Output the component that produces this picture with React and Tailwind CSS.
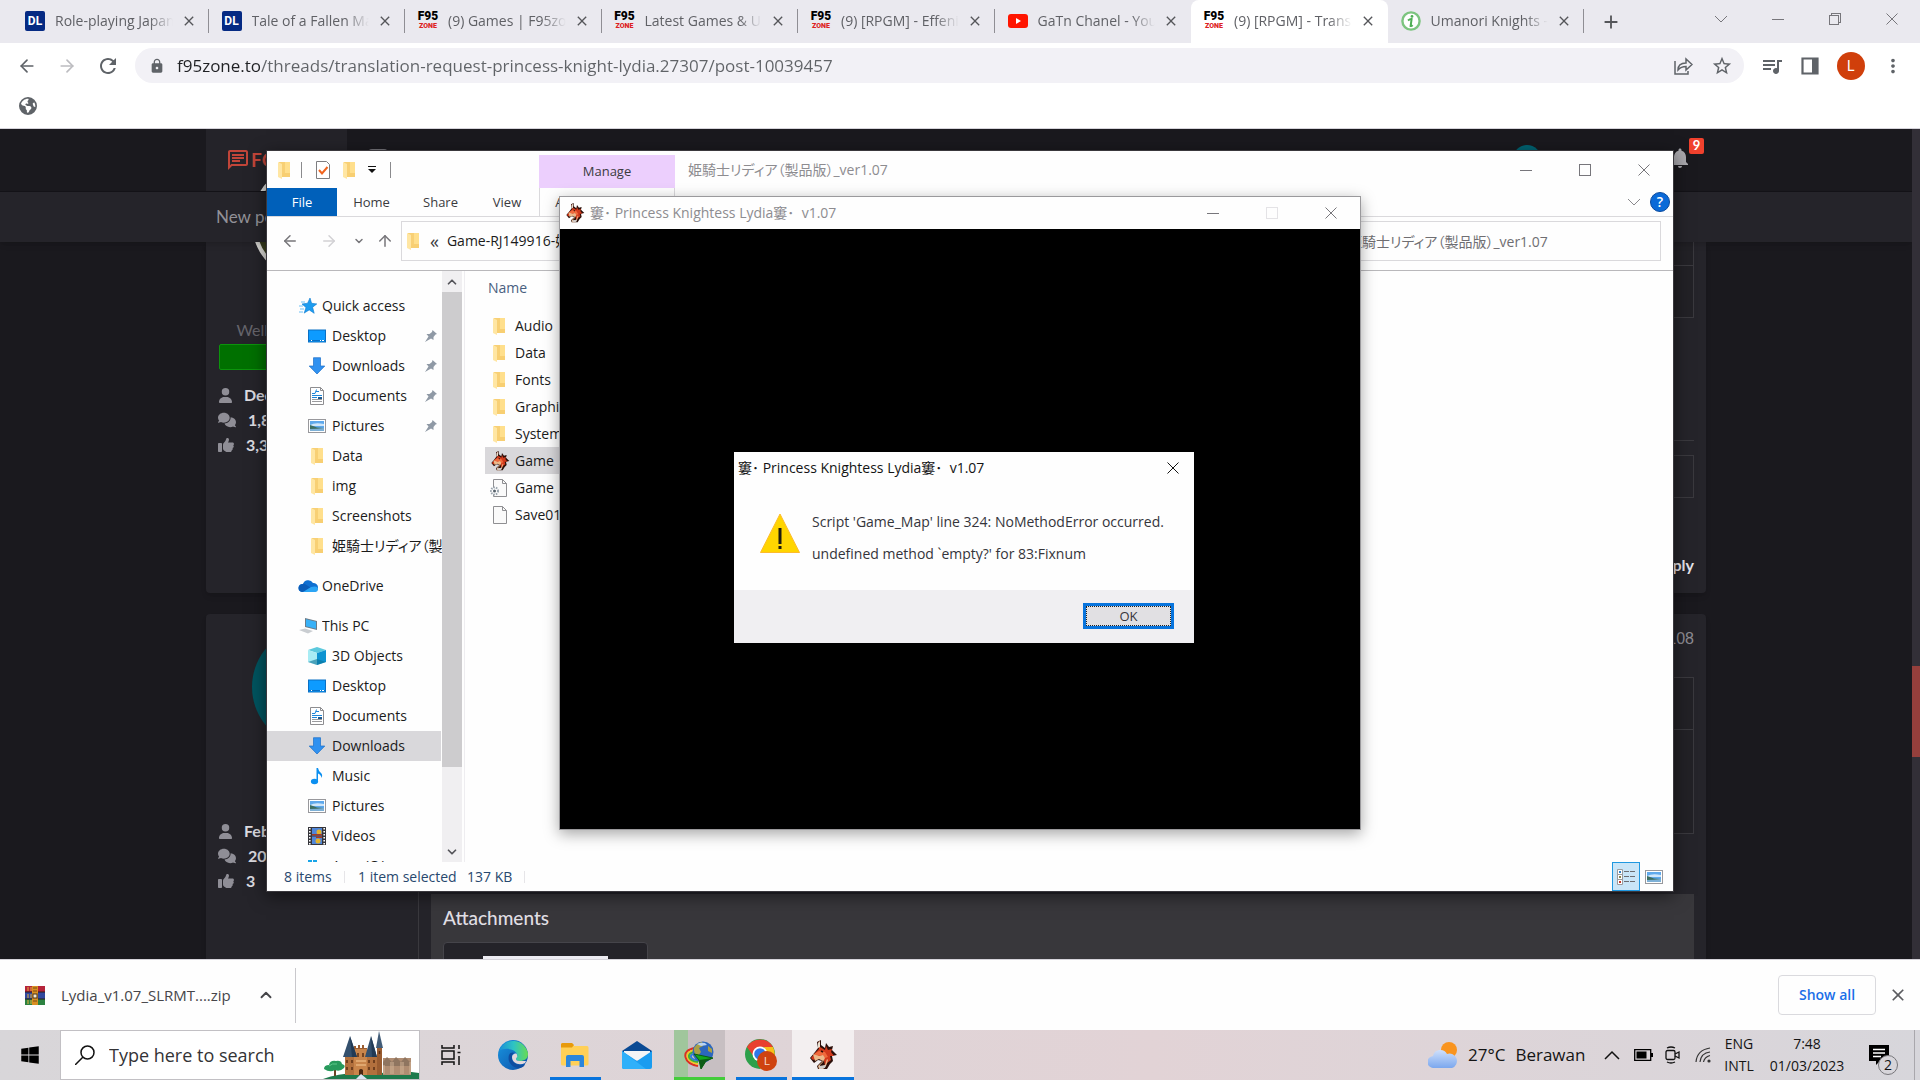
import clsx from 'clsx'
import { FaComments, FaThumbsUp, FaUser, FaWindows, FaEarthAmericas } from 'react-icons/fa6'
import {
  MdAdd, MdClose, MdLock, MdMoreVert, MdNotifications, MdOutlineChat,
  MdQueueMusic, MdRefresh, MdStarBorder,
} from 'react-icons/md'
import { ArrowLeft, ArrowRight, ArrowUp, ChevronDown, ChevronUp } from 'lucide-react'

const UI = "font-['Open_Sans','Noto_Sans_CJK_JP',sans-serif]"
const FOLDER_NAME = '姫騎士リディア（製品版）_ver1.07'
const GAME_TITLE = '窶･ Princess Knightess Lydia窶･\u00a0 v1.07'

/* ---------- favicons ---------- */

function DlIcon() {
  return (
    <span className="flex h-5 w-5 items-center justify-center rounded-xs bg-[#052a83] font-['Roboto',sans-serif] text-xs font-bold text-white">DL</span>
  )
}

function F95Icon() {
  return (
    <span className="flex h-5 w-5 flex-col items-center font-['Roboto',sans-serif] font-black leading-none">
      <span className="text-xs leading-[11px] text-black">F95</span>
      <span className="text-[7px] leading-[8px] text-[#d22]">ZONE</span>
    </span>
  )
}

function YoutubeIcon() {
  return (
    <svg viewBox="0 0 20 20" className="h-5 w-5">
      <rect y="3" width="20" height="14" rx="3" fill="#ff1500" />
      <path d="M8 7v6l5-3z" fill="#fff" />
    </svg>
  )
}

function InfoIcon() {
  return (
    <svg viewBox="0 0 20 20" className="h-5 w-5">
      <circle cx="10" cy="10" r="8.6" fill="#fff" stroke="#7cc47f" strokeWidth="2.4" />
      <path d="M7 9.5q2-1.6 3.6-1.4L9.6 15q1 .3 2-.8" fill="none" stroke="#4fae55" strokeWidth="2" />
      <circle cx="11" cy="5.4" r="1.4" fill="#4fae55" />
    </svg>
  )
}

/* ---------- explorer icons ---------- */

function FolderIcon() {
  return (
    <svg viewBox="0 0 18 18" className="h-[18px] w-[18px]">
      <path d="M4 1h11v12.500H4z" fill="#f8d075" />
      <path d="M10 1h5v12h-5z" fill="#ffdf8c" />
      <path d="M3 1l4 2v15l-4-2z" fill="#ffe6a3" />
      <path d="M7 12h8v4H7z" fill="#f8cf72" />
    </svg>
  )
}

function StarIcon() {
  return (
    <svg viewBox="0 0 18 18" className="h-[18px] w-[18px]">
      <path d="M11 1l1.6 5.3 5.2.6-4.2 3.3 1.6 6.1-5-3.4-5 3.2 1.8-5.6L3 7l5.6-.8z" fill="#1c9cf0" stroke="#0a78cf" strokeWidth=".6" />
      <path d="M0 9h4M1 12h4M0 15h4M2 5h4" stroke="#6cc0f5" />
    </svg>
  )
}

function DesktopIcon() {
  return (
    <svg viewBox="0 0 18 18" className="h-[18px] w-[18px]">
      <rect x=".5" y="3" width="17" height="12" fill="#0d9bff" stroke="#0a70c4" />
      <path d="M1 13.5h16" stroke="#0a70c4" />
      <path d="M3 13.5h1M12 13.5h1M14 13.5h2" stroke="#fff" />
    </svg>
  )
}

function DownloadIcon() {
  return (
    <svg viewBox="0 0 18 18" className="h-[18px] w-[18px]">
      <path d="M5.500.7h7v8.300h4.300L9 17 1.200 9h4.300z" fill="#3091f0" stroke="#1a6fc9" strokeWidth=".7" />
    </svg>
  )
}

function DocumentIcon() {
  return (
    <svg viewBox="0 0 18 18" className="h-[18px] w-[18px]">
      <path d="M2.500.5h10l3 3v14h-13z" fill="#fff" stroke="#8d8d90" />
      <path d="M12.500.5v3h3" fill="none" stroke="#8d8d90" />
      <path d="M4 6.500h3l1.500-4M8 4.500h3M4 8.500h10M4 10.500h5" stroke="#1d86d9" fill="none" />
      <path d="M4 12.500h10M4 14.500h10" stroke="#9a9a9d" />
      <path d="M10 10h4v2h-4z" fill="#1b5a92" />
    </svg>
  )
}

function PictureIcon() {
  return (
    <svg viewBox="0 0 18 18" className="h-[18px] w-[18px]">
      <rect x=".5" y="2.500" width="17" height="13" fill="#fff" stroke="#98989c" />
      <rect x="2" y="4" width="14" height="10" fill="#5fa9ec" />
      <path d="M2 8q5-3 14-1v2H2z" fill="#cfe6fa" />
      <path d="M2 8q4 1 7 2.500l7 .5v3H2z" fill="#3d6f62" />
      <path d="M2 12q7 0 14-1v3H2z" fill="#7db0d6" />
    </svg>
  )
}

function CloudIcon() {
  return (
    <svg viewBox="0 0 20 18" className="h-[18px] w-[20px]">
      <path d="M5 7a5.500 5.500 0 0 1 10-1 4.500 4.500 0 0 1 1 9H4A4 4 0 0 1 5 7z" fill="#0f6fd1" />
      <path d="M6 6.500l9 5.500-10 3H4a4 4 0 0 1-1-7.600z" fill="#0a5cb8" />
      <path d="M5 15l8-5q7-1.500 7 2a3 3 0 0 1-3 3z" fill="#2ba5f5" />
    </svg>
  )
}

function PcIcon() {
  return (
    <svg viewBox="0 0 20 18" className="h-[18px] w-[20px]">
      <path d="M7 1l12 3v9L7 10z" fill="#6b7b88" />
      <path d="M8 2.200l10 2.600v7L8 9.200z" fill="#38b1f7" />
      <path d="M1 13l6-1.500 8 2.500-5 2.500z" fill="#c9cdd1" />
    </svg>
  )
}

function CubeIcon() {
  return (
    <svg viewBox="0 0 18 18" className="h-[18px] w-[18px]">
      <path d="M9 0l9 3-9 3-9-3z" fill="#5cc9dd" />
      <path d="M0 3l9 3v12l-9-3z" fill="#a8ecf4" />
      <path d="M18 3l-9 3v12l9-3z" fill="#0d93d1" />
      <path d="M0 15l9-3 9 3-9 3z" fill="#0a7295" opacity=".6" />
    </svg>
  )
}

function MusicIcon() {
  return (
    <svg viewBox="0 0 18 18" className="h-[18px] w-[18px]">
      <ellipse cx="6.500" cy="14.500" rx="3.600" ry="2.800" fill="#0b8ff0" />
      <path d="M8.500 1H10q.5 3 3 5 2 2 .5 5-.2-3-3.500-4.500V15H8.500z" fill="#0b8ff0" />
    </svg>
  )
}

function VideoIcon() {
  return (
    <svg viewBox="0 0 18 18" className="h-[18px] w-[18px]">
      <rect width="18" height="18" fill="#35353a" />
      <path d="M1.800 1v17M16.200 1v17" stroke="#fff" strokeWidth="1.600" strokeDasharray="1.600 1.400" />
      <rect x="4" y="1" width="10" height="7.500" fill="#4f86d9" />
      <rect x="4" y="9.500" width="10" height="7.500" fill="#4f86d9" />
      <circle cx="11" cy="5" r="2.500" fill="#e3b22b" />
      <circle cx="10" cy="14" r="2.500" fill="#e3b22b" />
      <path d="M4 7h10v1.500H4zM8 9.500h6V11H8z" fill="#a63b22" />
    </svg>
  )
}

function DriveIcon() {
  return (
    <svg viewBox="0 0 18 18" className="h-[18px] w-[18px]">
      <path d="M0 3h4v4H0zM5 3h4v4H5z" fill="#18a5e8" />
      <path d="M0 9h18v6H0z" fill="#b5b7ba" />
    </svg>
  )
}

function BlankFileIcon({ gear }) {
  return (
    <svg viewBox="0 0 18 18" className="h-[18px] w-[18px]">
      <path d="M3.500.5h9l4 4v13h-13z" fill="#fafafa" stroke="#8f8f92" />
      <path d="M12.500.5v4h4" fill="none" stroke="#8f8f92" />
      {gear && (
        <>
          <circle cx="4.500" cy="12" r="3.500" fill="#fff" stroke="#9aa4ad" strokeWidth="2" strokeDasharray="1.500 1" />
          <circle cx="4.500" cy="12" r="1.500" fill="#56616b" />
        </>
      )}
    </svg>
  )
}

function CheckedFileIcon() {
  return (
    <svg viewBox="0 0 18 18" className="h-[18px] w-[18px]">
      <path d="M2.500.5h10l3 3v14h-13z" fill="#fff" stroke="#7d7d80" />
      <path d="M5 9l3 3.500L13.500 6" fill="none" stroke="#f0641e" strokeWidth="2" />
    </svg>
  )
}

function PinIcon() {
  return (
    <svg viewBox="0 0 14 14" className="h-[14px] w-[14px]">
      <path d="M8.500 1l4.500 4-1.500.6-2 2.400v3L7 9.500 1 13l3.500-5.500L2.500 5h3l2.500-2z" fill="#8f99a5" />
    </svg>
  )
}

function DragonIcon({ className }) {
  return (
    <svg viewBox="0 0 28 30" className={className}>
      <path d="M9 8L8 2l4-2v5l4 3 1-5 3 4 4-1-1 4 5 5-5 1 1 5-3 3-3 5H9l-1-3 5-5-4-1-4 3-4-5 5-6z" fill="#2b0f0a" />
      <path d="M10 9L9 3l2-2v6l5 3 1-4 2 4 4-1-1 3 3 4-4 0 1 4-4 3-2 3-1-6-6-2-5 2-2-2 4-5z" fill="#d23a1c" />
      <path d="M10 11l6 1 3 5-3 1-3-3-5 1-3-2z" fill="#f06a3c" />
      <path d="M4 14l3 1 3 1 4-1 2 3-2 4-3 3v2l5-2 2-6 1 1-2 6-3 3H10l-1-3 5-5-4-2-4 2z" fill="#edb98a" />
      <path d="M10 26l7-1-1 3-5 1z" fill="#cfcac8" />
      <path d="M9 3l2-2v6l-2 1z" fill="#e8dfcf" />
      <path d="M12 11l2 1" stroke="#2b0f0a" strokeWidth="1.500" />
    </svg>
  )
}

/* ---------- window buttons ---------- */

function WinGlyph({ type, className }) {
  return (
    <svg viewBox="0 0 12 12" className={clsx('h-3 w-3', className)} fill="none" stroke="currentColor" shapeRendering={type === 'close' ? 'auto' : 'crispEdges'}>
      {type === 'min' && <path d="M0 6.500h12" />}
      {type === 'max' && <path d="M.5.5h11v11H.5z" />}
      {type === 'restore' && <path d="M.5 2.500h9v9h-9zM2.500 2V.5h9v9H10" />}
      {type === 'close' && <path d="M.5.5l11 11M11.500.5l-11 11" />}
      {type === 'down' && <path d="M0 3l6 6 6-6" shapeRendering="auto" />}
    </svg>
  )
}

/* ---------- browser ---------- */

const TABS = [
  { icon: DlIcon, title: 'Role-playing Japanese' },
  { icon: DlIcon, title: 'Tale of a Fallen Maiden' },
  { icon: F95Icon, title: '(9) Games | F95zone' },
  { icon: F95Icon, title: 'Latest Games & Updates' },
  { icon: F95Icon, title: '(9) [RPGM] - Effenia' },
  { icon: YoutubeIcon, title: 'GaTn Chanel - YouTube' },
  { icon: F95Icon, title: '(9) [RPGM] - Translation', active: true },
  { icon: InfoIcon, title: 'Umanori Knights -' },
]

function TabStrip() {
  return (
    <header className="flex h-[43px] shrink-0 bg-[#eae9ef] pl-3">
      <nav className="flex w-[1572px] min-w-0">
        {TABS.map(({ icon: Icon, title, active }, i) => (
          <div key={i} className={clsx('flex min-w-0 flex-1 items-center pb-px', active && 'rounded-t-lg bg-white')}>
            <div className={clsx('flex h-6 min-w-0 flex-1 items-center border-r pr-[11px] pl-[13px]', active || i === 5 ? 'border-transparent' : 'border-[#8f8e94]')}>
              <Icon />
              <span className="ml-[10px] min-w-0 flex-1 overflow-hidden text-sm whitespace-nowrap text-[#606166] [mask-image:linear-gradient(to_right,#000_80%,transparent)]">{title}</span>
              <button aria-label="Close tab" className="ml-2 text-[#55565a]"><MdClose size={16} /></button>
            </div>
          </div>
        ))}
      </nav>
      <button aria-label="New tab" className="ml-4 text-[#55565a]"><MdAdd size={22} /></button>
      <div className="ml-auto flex h-[37px] text-[#77767b]">
        <button aria-label="Search tabs" className="flex w-[57px] items-center justify-center"><WinGlyph type="down" /></button>
        <button aria-label="Minimize" className="flex w-[57px] items-center justify-center"><WinGlyph type="min" /></button>
        <button aria-label="Restore" className="flex w-[57px] items-center justify-center"><WinGlyph type="restore" /></button>
        <button aria-label="Close" className="flex w-[57px] items-center justify-center"><WinGlyph type="close" /></button>
      </div>
    </header>
  )
}

function Toolbar() {
  return (
    <div className="flex h-[45px] shrink-0 items-center bg-white text-[#5f6368]">
      <div className="flex w-[135px] shrink-0 items-center justify-between pr-[15px] pl-[17px]">
        <button aria-label="Back"><ArrowLeft size={20} /></button>
        <button aria-label="Forward" className="text-[#bcbcc0]"><ArrowRight size={20} /></button>
        <button aria-label="Reload"><MdRefresh size={24} /></button>
      </div>
      <div className="flex h-[35px] flex-1 items-center rounded-full bg-[#f2f1f6] pr-[11px] pl-[14px]">
        <MdLock size={16} />
        <input
          aria-label="Address"
          defaultValue="f95zone.to/threads/translation-request-princess-knight-lydia.27307/post-10039457"
          className="ml-3 min-w-0 flex-1 bg-[linear-gradient(to_right,#202124_84px,#606367_84px)] bg-clip-text text-[17px] text-transparent outline-none"
        />
        <button aria-label="Share" className="mr-[18px]">
          <svg viewBox="0 0 20 20" className="h-5 w-5" fill="none" stroke="currentColor" strokeWidth="1.500">
            <path d="M2 5v13h13v-3" />
            <path d="M5 14q0-7 8-7V3l6 5.500L13 14v-3.500q-5 0-8 3.500z" />
          </svg>
        </button>
        <button aria-label="Bookmark"><MdStarBorder size={22} /></button>
      </div>
      <div className="flex w-[176px] shrink-0 items-center justify-between pr-4 pl-[16px]">
        <button aria-label="Media"><MdQueueMusic size={24} /></button>
        <button aria-label="Side panel">
          <svg viewBox="0 0 18 18" className="h-[18px] w-[18px]">
            <path d="M1.500 1.500h15v15h-15z" fill="none" stroke="currentColor" strokeWidth="2.200" />
            <path d="M11 1h6v16h-6z" fill="currentColor" />
          </svg>
        </button>
        <button aria-label="Profile" className="h-7 w-7 rounded-full bg-[#d03f0b] font-['Roboto',sans-serif] text-sm text-white">L</button>
        <button aria-label="Menu"><MdMoreVert size={22} /></button>
      </div>
    </div>
  )
}

/* ---------- forum page ---------- */

function UserStats({ joined, messages, likes }) {
  return (
    <dl className="flex w-full flex-col gap-px pl-3 text-base leading-6 font-bold text-[#dcdbe0]">
      <div className="flex items-center gap-3"><dt className="w-[14px] text-[#8f8e96]"><FaUser size={15} /></dt><dd>{joined}</dd></div>
      <div className="flex items-center gap-3"><dt className="w-[18px] text-[#8f8e96]"><FaComments size={18} /></dt><dd>{messages}</dd></div>
      <div className="flex items-center gap-3"><dt className="w-4 text-[#8f8e96]"><FaThumbsUp size={16} /></dt><dd>{likes}</dd></div>
    </dl>
  )
}

function ForumPage() {
  return (
    <main className="isolate flex min-h-0 flex-1 border-t border-[#d5d3da] bg-[#1a191e] font-['Lato',sans-serif]">
      <div className="flex min-w-0 flex-1 flex-col overflow-hidden">
        <div className="h-[62px] shrink-0">
          <div className="mx-auto flex h-full max-w-[1500px]">
            <a href="#forums" className="flex w-[141px] items-center gap-px bg-[#242329] pl-5 text-[19px] font-bold text-[#c14539]">
              <MdOutlineChat size={24} />FORUMS
            </a>
            <div className="mt-5 ml-[21px] h-5 w-5 rounded-sm bg-[#76757b]" />
            <div className="mt-4 ml-auto h-7 w-7 rounded-full bg-[#006372]" />
            <div className="mt-[21px] ml-[84px] h-4 w-4 bg-[#76757b]" />
            <div className="relative mt-[17px] mr-[14px] ml-[27px] h-6 w-6 text-[#a9a8ad]">
              <MdNotifications size={24} />
              <span className="absolute -top-2 left-[21px] flex h-4 w-[15px] items-center justify-center rounded-xs bg-[#f1412d] text-[13px] font-bold text-white">9</span>
            </div>
          </div>
        </div>
        <div className="z-10 h-[51px] shrink-0 border-t border-[#131217] bg-[#25242a] shadow-md">
          <div className="mx-auto flex h-full max-w-[1500px] items-center px-[10px]">
            <a href="#new" className="text-[17px] text-[#929197]">New posts</a>
          </div>
        </div>

        <div className="mx-auto flex min-h-0 w-full max-w-[1500px] flex-1 flex-col gap-[21px]">
          <article className="flex h-[351px] shrink-0 rounded-b-sm bg-[#25242a] shadow-md">
            <div className="flex w-[213px] shrink-0 flex-col items-center border-r border-[#3a393e]">
              <div className="-mt-20 h-[120px] w-[120px] rounded-full border-4 border-[#dddcd8] bg-[#3b4020]" />
              <div className="mt-9 text-base leading-6 text-[#66656c]">Well-Known Member</div>
              <div className="mt-[2px] mb-[13px] h-[26px] w-[186px] rounded-xs border border-[#0c940c] bg-[#007000]" />
              <UserStats joined="Dec 26, 2018" messages="1,834" likes="3,312" />
            </div>
            <div className="flex min-w-0 flex-1 flex-col pr-3 pl-3">
              <div className="border border-t-0 border-[#3a393e] bg-[#222126]">
                <div className="h-6 border-b border-[#3a393e]" />
                <div className="h-[51px]" />
              </div>
              <div className="mt-[122px] h-px bg-[#3a393e]" />
              <div className="mt-[14px] h-[43px] border border-[#3a393e]" />
              <button className="mt-[55px] self-end text-base leading-6 font-bold text-[#e6e5ea]">Reply</button>
            </div>
          </article>

          <article className="flex min-h-0 flex-1 rounded-t-sm bg-[#25242a] shadow-md">
            <div className="flex w-[213px] shrink-0 flex-col items-center border-r border-[#3a393e] pt-[13px]">
              <div className="mb-[72px] h-[120px] w-[120px] shrink-0 rounded-full bg-[#00545f]" />
              <UserStats joined="Feb 28, 2021" messages="20" likes="3" />
            </div>
            <div className="flex min-w-0 flex-1 flex-col pr-3 pl-3">
              <a href="#post" className="self-end pt-[13px] font-['Liberation_Sans',sans-serif] text-base leading-6 text-[#8d8c93]">#108</a>
              <div className="mt-[26px] border border-[#3a393e] bg-[#222126]">
                <div className="h-[52px] border-b border-[#3a393e]" />
                <div className="h-[103px]" />
              </div>
              <section className="mt-[60px] h-[120px] bg-[#38373b] px-3 pt-[10px]">
                <h4 className="text-[19px] leading-7 font-medium text-[#e0dfe4]">Attachments</h4>
                <div className="mt-[10px] h-20 w-[205px] rounded-t-sm border border-[#45444a] bg-[#242329] px-[39px] pt-[13px]">
                  <div className="h-20 bg-[#ecebf2]" />
                </div>
              </section>
            </div>
          </article>
        </div>
      </div>
      <div className="w-2 shrink-0 bg-[#322f37] pt-[537px]">
        <div className="h-[91px] bg-[#953f3c]" />
      </div>
    </main>
  )
}

function RarIcon() {
  return (
    <svg viewBox="0 0 20 19" className="h-[19px] w-5">
      <rect width="20" height="6" fill="#b5243a" />
      <rect y="6" width="20" height="7" fill="#31489e" />
      <rect y="13" width="20" height="6" fill="#2c8240" />
      <path d="M0 6h20M0 13h20" stroke="#2a1c1c" />
      <path d="M3 1v4M3 8v4M3 14v4M6 1v4M6 8v4M6 14v4" stroke="#e8b13a" />
      <rect x="7" width="6" height="19" fill="#d98f22" />
      <rect x="8" y="8" width="4" height="4" fill="#f2ead8" stroke="#4a3216" />
      <path d="M8 2h4M8 5h4M8 15h4" stroke="#7a4b12" />
    </svg>
  )
}

function DownloadBar() {
  return (
    <div className="z-10 flex h-[71px] shrink-0 items-center border-t border-[#d5d3da] bg-[#fefefe]">
      <button className="flex h-[55px] w-[296px] items-center border-r border-[#c9c8cc] pl-[25px] text-[15px] text-[#46464a]">
        <RarIcon />
        <span className="ml-4 w-[188px] text-left">Lydia_v1.07_SLRMT....zip</span>
        <ChevronUp size={18} strokeWidth={2.500} className="ml-2" />
      </button>
      <button className="mb-px ml-auto h-10 w-[98px] rounded border border-[#dadade] text-sm font-semibold text-[#1a6fe8]">Show all</button>
      <button aria-label="Close downloads" className="mx-3 text-[#5b5c60]"><MdClose size={20} /></button>
    </div>
  )
}

/* ---------- explorer window ---------- */

const TREE = [
  { label: 'Quick access', icon: StarIcon, root: true },
  { label: 'Desktop', icon: DesktopIcon, pin: true },
  { label: 'Downloads', icon: DownloadIcon, pin: true },
  { label: 'Documents', icon: DocumentIcon, pin: true },
  { label: 'Pictures', icon: PictureIcon, pin: true },
  { label: 'Data', icon: FolderIcon },
  { label: 'img', icon: FolderIcon },
  { label: 'Screenshots', icon: FolderIcon },
  { label: FOLDER_NAME, icon: FolderIcon },
  { label: 'OneDrive', icon: CloudIcon, root: true, gap: true },
  { label: 'This PC', icon: PcIcon, root: true, gap: true },
  { label: '3D Objects', icon: CubeIcon },
  { label: 'Desktop', icon: DesktopIcon },
  { label: 'Documents', icon: DocumentIcon },
  { label: 'Downloads', icon: DownloadIcon, selected: true },
  { label: 'Music', icon: MusicIcon },
  { label: 'Pictures', icon: PictureIcon },
  { label: 'Videos', icon: VideoIcon },
  { label: 'Acer (C:)', icon: DriveIcon },
]

const FILES = [
  { name: 'Audio', icon: <FolderIcon /> },
  { name: 'Data', icon: <FolderIcon /> },
  { name: 'Fonts', icon: <FolderIcon /> },
  { name: 'Graphics', icon: <FolderIcon /> },
  { name: 'System', icon: <FolderIcon /> },
  { name: 'Game', icon: <DragonIcon className="h-5 w-5" />, selected: true },
  { name: 'Game', icon: <BlankFileIcon gear /> },
  { name: 'Save01', icon: <BlankFileIcon /> },
]

function NavTree() {
  return (
    <ul className="min-h-0 w-[175px] shrink-0 overflow-hidden pt-5 text-sm text-[#1b1b1b]">
      {TREE.map(({ label, icon: Icon, root, pin, gap, selected }, i) => (
        <li key={i} className={clsx('flex h-[30px] items-center', root ? 'pl-[31px]' : 'pl-10', gap && 'mt-[10px]', selected && 'mr-px bg-[#d9d8db]')}>
          <span className="flex w-5 shrink-0 justify-center"><Icon /></span>
          <span className={clsx("min-w-0 flex-1 overflow-hidden whitespace-nowrap [font-feature-settings:'palt']", root ? 'ml-1' : 'ml-[5px]')}>{label}</span>
          {pin && <span className="mr-1"><PinIcon /></span>}
        </li>
      ))}
    </ul>
  )
}

function ExplorerWindow() {
  return (
    <section className="absolute top-[150px] left-[266px] flex h-[742px] w-[1408px] flex-col border border-[#3a383d] bg-[#fefefe] text-sm text-[#3b3b3e] shadow-[0_4px_16px_rgba(0,0,0,0.5)]">
      <div className="flex h-[37px] shrink-0">
        <div className="flex w-[272px] items-center pl-2">
          <FolderIcon />
          <span className="mr-3 ml-2 h-4 w-px bg-[#8a8a8d]" />
          <CheckedFileIcon />
          <span className="ml-2"><FolderIcon /></span>
          <svg viewBox="0 0 8 8" className="mr-[14px] ml-[10px] h-2 w-2"><path d="M0 .5h8" stroke="#111" /><path d="M0 3h8L4 7z" fill="#111" /></svg>
          <span className="h-4 w-px bg-[#8a8a8d]" />
        </div>
        <div className="mt-1 flex w-[136px] items-center justify-center bg-[#eccffd] text-[13px]">Manage</div>
        <div className="flex items-center pl-[13px] text-sm text-[#8d8c90] [font-feature-settings:'palt']">{FOLDER_NAME}</div>
        <div className="ml-auto flex text-[#77767b]">
          <button aria-label="Minimize" className="flex w-[59px] items-center justify-center"><WinGlyph type="min" /></button>
          <button aria-label="Maximize" className="flex w-[59px] items-center justify-center"><WinGlyph type="max" /></button>
          <button aria-label="Close" className="flex w-[59px] items-center justify-center"><WinGlyph type="close" /></button>
        </div>
      </div>
      <div className="flex h-[29px] shrink-0 items-center border-b border-[#dad9dc] text-[13px]">
        <button className="h-full w-[70px] bg-[#0060ba] text-white">File</button>
        <button className="w-[69px]">Home</button>
        <button className="w-[69px]">Share</button>
        <button className="w-[64px]">View</button>
        <button className="h-full w-[136px] border-x border-[#dad9dc] whitespace-nowrap">Application Tools</button>
        <span className="mr-[10px] ml-auto text-[#8a898d]"><WinGlyph type="down" /></span>
        <button aria-label="Help" className="mr-[3px] flex h-5 w-5 items-center justify-center rounded-full border border-[#0a4a9e] bg-[#0a6ad8] text-sm font-semibold text-white">?</button>
      </div>
      <div className="flex h-[54px] shrink-0 items-center border-b border-[#b9b8bb] pr-3 pb-[5px] text-[#77767a]">
        <div className="flex w-[134px] items-center pl-[14px]">
          <button aria-label="Back"><ArrowLeft size={18} /></button>
          <button aria-label="Forward" className="ml-[21px] text-[#d2d1d4]"><ArrowRight size={18} /></button>
          <button aria-label="Recent" className="ml-[15px]"><ChevronDown size={12} strokeWidth={3} /></button>
          <button aria-label="Up" className="ml-[11px]"><ArrowUp size={18} /></button>
        </div>
        <div className="flex h-10 w-[800px] items-center border border-[#dad9dc] pl-[2px]">
          <FolderIcon />
          <span className="ml-2 text-lg leading-5 text-[#3b3b3e]">«</span>
          <span className="ml-2 text-[#1b1b1b] [font-feature-settings:'palt']">Game-RJ149916-{FOLDER_NAME}</span>
        </div>
        <input
          aria-label="Search"
          defaultValue={`Search ${FOLDER_NAME}`}
          className="ml-3 h-10 min-w-0 flex-1 border border-[#dad9dc] pl-[86px] text-sm text-[#6f6e72] [font-feature-settings:'palt']"
        />
      </div>
      <div className="flex min-h-0 flex-1">
        <NavTree />
        <div className="flex w-5 flex-col items-center bg-[#f0eff1] text-[#55555a]">
          <span className="flex h-[21px] items-center"><ChevronUp size={14} strokeWidth={3} /></span>
          <div className="h-[475px] w-full bg-[#cdccce]" />
          <span className="mt-auto flex h-[21px] items-center"><ChevronDown size={14} strokeWidth={3} /></span>
        </div>
        <div className="ml-[2px] flex-1 border-l border-[#eeedf0] pl-5">
          <table className="w-[300px] text-[#1b1b1b]">
            <thead>
              <tr><th className="h-[41px] pb-2 pl-[3px] text-left align-middle font-normal text-[#4a5f80]" colSpan={2}>Name</th></tr>
            </thead>
            <tbody>
              {FILES.map(({ name, icon, selected }, i) => (
                <tr key={i} className={clsx('h-[27px]', selected && 'bg-[#d9d8db]')}>
                  <td className="w-[30px] pl-[5px]">{icon}</td>
                  <td>{name}</td>
                </tr>
              ))}
            </tbody>
          </table>
        </div>
      </div>
      <div className="flex h-[29px] shrink-0 items-center pl-[17px] text-sm text-[#28486e]">
        <span className="w-[60px]">8 items</span>
        <span className="h-3 w-px bg-[#e6e5e8]" />
        <span className="ml-[13px] w-[109px] whitespace-nowrap">1 item selected</span>
        <span>137 KB</span>
        <span className="ml-3 h-3 w-px bg-[#e6e5e8]" />
        <button aria-label="Details view" className="ml-auto flex h-[29px] w-7 items-center justify-center border border-[#1f98e0] bg-[#c9e5f7]">
          <svg viewBox="0 0 18 16" className="h-4 w-[18px]">
            <path d="M.5.5h5v5h-5zM.5 5.500h5v5h-5zM.5 10.500h5v5h-5z" fill="#fff" stroke="#9a9a9d" />
            <path d="M2 2h2v2H2z" fill="#2f7fc4" /><path d="M2 7h2v2H2z" fill="#88834a" /><path d="M2 12h2v2H2z" fill="#c33a2a" />
            <path d="M7 2.500h5M13 2.500h5M7 7.500h5M13 7.500h5M7 12.500h5M13 12.500h5" stroke="#6d6d71" />
          </svg>
        </button>
        <button aria-label="Large icons view" className="mr-[10px] ml-[5px]"><PictureIcon /></button>
      </div>
    </section>
  )
}

/* ---------- game + error dialog ---------- */

function GameWindow() {
  return (
    <section className="absolute top-[196px] left-[559px] flex h-[634px] w-[802px] flex-col border border-[#9a999c] bg-black shadow-[0_4px_14px_rgba(0,0,0,0.35)]">
      <div className="flex h-8 shrink-0 items-center bg-[#fefefe] pl-[5px] text-sm text-[#8d8c90]">
        <DragonIcon className="h-5 w-5" />
        <span className="ml-[5px]">{GAME_TITLE}</span>
        <div className="ml-auto flex h-full text-[#77767b]">
          <button aria-label="Minimize" className="flex w-[59px] items-center justify-center"><WinGlyph type="min" /></button>
          <button aria-label="Maximize" disabled className="flex w-[59px] items-center justify-center text-[#e4e3e6]"><WinGlyph type="max" /></button>
          <button aria-label="Close" className="flex w-[59px] items-center justify-center"><WinGlyph type="close" /></button>
        </div>
      </div>
    </section>
  )
}

function ErrorDialog() {
  return (
    <section role="alertdialog" className="absolute top-[452px] left-[734px] flex h-[191px] w-[460px] flex-col bg-[#fefefe]">
      <div className="flex h-8 items-center justify-between pr-[15px] pl-1 text-sm text-[#141414]">
        <span>{GAME_TITLE}</span>
        <button aria-label="Close"><WinGlyph type="close" /></button>
      </div>
      <div className="flex flex-1 gap-3 pt-[22px] pl-[26px]">
        <svg viewBox="0 0 40 40" className="mt-[7px] h-10 w-10">
          <path d="M20 1l19.500 38.500H.5z" fill="#ffd500" stroke="#fdbb2c" />
          <path d="M20 15v16M20 33v3" stroke="#1c1a10" strokeWidth="3" />
        </svg>
        <div className="text-sm leading-8 font-medium text-[#35353b]">
          <p>Script 'Game_Map' line 324: NoMethodError occurred.</p>
          <p>undefined method `empty?' for 83:Fixnum</p>
        </div>
      </div>
      <div className="flex h-[53px] items-center justify-end bg-[#f0eff2] pr-5 pb-px">
        <button className="h-[26px] w-[91px] border-[3px] border-[#0874dd] bg-[#e1e0e3] text-[13px] leading-4 font-medium text-[#35353b]">
          <span className="flex h-full items-center justify-center border border-dotted border-[#222]">OK</span>
        </button>
      </div>
    </section>
  )
}

/* ---------- taskbar ---------- */

function CastleArt() {
  return (
    <svg viewBox="0 0 96 48" className="h-12 w-24">
      <path d="M0 48q20-8 50-5 30-4 46-1v6z" fill="#1e7a4c" />
      <path d="M60 27h28v17H60z" fill="#b08d72" />
      <path d="M60 31l4-5 5 5 4-5 5 5 4-5 5 5v4H60z" fill="#8f7560" />
      <path d="M61 34v9M68 31v12M70 31v12M78 31v12M80 31v12M87 31v12" stroke="#d2b496" />
      <path d="M22 25h10v19H22zM43 25h11v19H43z" fill="#b2703d" />
      <path d="M31 18h13v26H31z" fill="#c9854b" />
      <path d="M54 16h5v28h-5z" fill="#9a5c30" />
      <path d="M31 18v-3h2v2h2v-3h2v3h2v-3h2v3h3v1z" fill="#9a5c30" />
      <path d="M27 5l7 21H20zM48 5l6 21H42z" fill="#34506d" />
      <path d="M27 5l2 21h5zM48 5l1 21h5z" fill="#223a55" />
      <path d="M56 0l4 17h-7z" fill="#415c78" />
      <path d="M24 29v3M29 29v3M35 22v4M40 22v4M46 29v3M51 29v3M24 36v3M29 36v3M46 36v3M51 36v3M56.500 20v3" stroke="#5b2f14" strokeWidth="1.500" />
      <path d="M33 30h10M33 34h10" stroke="#e8b27c" strokeWidth="1.500" />
      <path d="M36 44v-5q2-2 4 0v5z" fill="#4a2712" />
      <path d="M33 48l5-5 6 5z" fill="#dbe4f3" />
      <path d="M12 36v9" stroke="#6b4425" strokeWidth="2" />
      <path d="M1 38q0-4 5-4 1-5 7-4 5-1 6 3 4 1 2 4-4 4-9 2-5 3-11-1z" fill="#279a5c" />
      <path d="M6 35q3-3 8-2" stroke="#5cc98a" fill="none" />
    </svg>
  )
}

function EdgeIcon() {
  return (
    <svg viewBox="0 0 30 30" className="h-[30px] w-[30px]">
      <defs>
        <linearGradient id="edgeTop" x1="0" x2="1"><stop offset="0" stopColor="#1b8fd6" /><stop offset=".5" stopColor="#2ec3c4" /><stop offset="1" stopColor="#68dc52" /></linearGradient>
        <linearGradient id="edgeSide" x1="0" y1="0" x2="1" y2="1"><stop offset="0" stopColor="#1996e0" /><stop offset="1" stopColor="#0c4fa8" /></linearGradient>
      </defs>
      <circle cx="15" cy="15" r="15" fill="url(#edgeSide)" />
      <path d="M1 11A15 15 0 0 1 30 14c0 5-4 7-8 7-3 0-4-1-4-2s2-2 1-5c-2-5-12-7-18-3z" fill="url(#edgeTop)" />
      <path d="M11 15c-2 7 3 13 10 13 4 0 6-3 6-4-8 3-14-2-13-8 0-2 2-3 3-3-2-1-5-1-6 2z" fill="#0f4da0" />
      <path d="M14 17c0-3 5-5 5-2 1 2-1 3-1 4s1 2 4 2l6 0-1 2c-6 3-13 0-13-6z" fill="#e4d8dc" />
    </svg>
  )
}

function ExplorerIcon() {
  return (
    <svg viewBox="0 0 28 24" className="h-6 w-7">
      <path d="M0 1.500Q0 0 1.500 0H11l2 3h13q1.500 0 1.500 1.500V21q0 1.500-1.500 1.500H1.500Q0 22.500 0 21z" fill="#ffd057" />
      <path d="M0 1.500Q0 0 1.500 0H11l2 2-2 2.500H0z" fill="#e79a0c" />
      <path d="M5 14q0-2 2-2h14q2 0 2 2v10h-4.500v-6h-9v6H5z" fill="#2b86dc" />
    </svg>
  )
}

function MailIcon() {
  return (
    <svg viewBox="0 0 30 28" className="h-7 w-[30px]">
      <path d="M0 10L15 0l15 10v6H0z" fill="#0a4a94" />
      <path d="M2 10h26v9H2z" fill="#f3f4f6" />
      <path d="M0 10l15 10L30 10v16q0 2-2 2H2q-2 0-2-2z" fill="#1a9cf0" />
      <path d="M0 10l24 18H2q-2 0-2-2z" fill="#2fb0fa" />
    </svg>
  )
}

function IdmIcon() {
  return (
    <svg viewBox="0 0 30 28" className="h-7 w-[30px]">
      <path d="M11 7Q0 9 1.500 16T14 25" fill="none" stroke="#dc2f22" strokeWidth="2" />
      <path d="M11 9Q2 11 3.500 16T14 23" fill="none" stroke="#f5c723" strokeWidth="2" />
      <path d="M11 11q-7 1-6 5t9 5" fill="none" stroke="#3fae3c" strokeWidth="2" />
      <path d="M12 13q-6 0-5 3t7 3" fill="none" stroke="#2f7cdc" strokeWidth="2" />
      <circle cx="19" cy="11" r="10.500" fill="#2b67bd" />
      <path d="M10 7q3-5 8-6l1 4-4 2 2 4-3 4q-5-3-4-8zM24 5l4 3v4l-4-2z" fill="#a9a046" />
      <path d="M13 3q4-2 8-1l2 2-6 1z" fill="#b9d3f0" />
      <path d="M10 13l19 4-7 3-5 8-2-9z" fill="#12a81f" stroke="#0a5c12" />
      <path d="M15 19l14-2-7 3-5 8z" fill="#0c5c16" />
    </svg>
  )
}

function ChromeIcon() {
  return (
    <svg viewBox="0 0 32 32" className="h-8 w-8">
      <circle cx="15" cy="15" r="15" fill="#2da04b" />
      <path d="M2 8A15 15 0 0 1 28 8H15l-6 10z" fill="#e8402f" />
      <path d="M28 8a15 15 0 0 1-13 22l7-12-3-10z" fill="#f9bf18" />
      <circle cx="15" cy="15" r="7.500" fill="#fff" />
      <circle cx="15" cy="15" r="5.800" fill="#2f77e8" />
      <circle cx="22" cy="22" r="10" fill="#cf430f" />
      <text x="22" y="26" textAnchor="middle" fontFamily="Roboto" fontSize="11" fill="#f3d8cc">L</text>
    </svg>
  )
}

function WeatherIcon() {
  return (
    <svg viewBox="0 0 30 26" className="h-[26px] w-[30px]">
      <defs><linearGradient id="cloud" x1="0" y1="0" x2="0" y2="1"><stop offset="0" stopColor="#cfe0fb" /><stop offset="1" stopColor="#7ba7ee" /></linearGradient></defs>
      <circle cx="21" cy="8" r="8" fill="#f9941e" />
      <path d="M6 26a6 6 0 0 1-1-12 7.500 7.500 0 0 1 14-2 7 7 0 0 1 5 14z" fill="url(#cloud)" />
    </svg>
  )
}

function TaskViewIcon() {
  return (
    <svg viewBox="0 0 20 20" className="h-5 w-5" fill="none" stroke="#111" strokeWidth="1.500">
      <path d="M1 0v3h12V0M1 6h12v8H1zM1 20v-3h12v3" />
      <path d="M18 0v4M18 11v9M16.500 7.500h3" />
    </svg>
  )
}

function CameraIcon() {
  return (
    <svg viewBox="0 0 16 18" className="h-[18px] w-4" fill="none" stroke="#111" strokeWidth="1.300">
      <rect x="1" y="4.500" width="9" height="9" rx="1.500" />
      <path d="M10 8l4-2v6l-4-2M2 2q4-2 8 0M2 16q4 2 8 0" />
    </svg>
  )
}

function WifiIcon() {
  return (
    <svg viewBox="0 0 16 16" className="h-4 w-4" fill="none" stroke="#333" strokeWidth="1.200">
      <path d="M1 15Q2 3 15 1M5 15q1-9 10-10M8.500 15q1-5 6.500-6.500" />
      <circle cx="14" cy="14" r="1" fill="#111" />
    </svg>
  )
}

const APPS = [
  { name: 'Edge', icon: <EdgeIcon /> },
  { name: 'File Explorer', icon: <ExplorerIcon />, open: true },
  { name: 'Mail', icon: <MailIcon /> },
  { name: 'Internet Download Manager', icon: <IdmIcon />, progress: true },
  { name: 'Chrome', icon: <ChromeIcon />, open: true },
  { name: 'Game', icon: <DragonIcon className="h-[30px] w-7" />, active: true },
]

function Taskbar() {
  return (
    <footer className="z-10 flex h-[50px] shrink-0 bg-linear-to-r from-[#d8d6d9] via-[#e2d3d6] via-60% to-[#d7d6db] text-[#141414]">
      <button aria-label="Start" className="flex w-[60px] items-center justify-center text-black"><FaWindows size={20} /></button>
      <label className="flex w-[360px] items-center border border-[#c2c0c4] bg-white pl-[14px]">
        <svg viewBox="0 0 20 20" className="h-5 w-5 shrink-0" fill="none" stroke="#111" strokeWidth="1.500">
          <circle cx="12.500" cy="7.500" r="6.500" /><path d="M8 12l-8 8" />
        </svg>
        <input aria-label="Search" placeholder="Type here to search" className="ml-[14px] w-[214px] text-lg leading-6 outline-none placeholder:text-[#333336]" />
        <CastleArt />
      </label>
      <button aria-label="Task view" className="flex w-[62px] items-center justify-center"><TaskViewIcon /></button>
      {APPS.map(({ name, icon, open, progress, active }) => (
        <button
          key={name}
          aria-label={name}
          className={clsx('relative flex h-full w-[62px] items-center justify-center first-of-type:ml-px', active && 'bg-[#f3eff0]')}
        >
          {progress && (
            <span className="absolute inset-y-0 left-[6px] flex w-[51px] border-b-[3px] border-[#43cc3a]">
              <span className="w-[14px] bg-[#a0c69c]" />
              <span className="flex-1 bg-[#c7bfc2]" />
            </span>
          )}
          {open && <span className="absolute bottom-0 left-[6px] h-[3px] w-[51px] bg-[#0874dd]" />}
          {active && <span className="absolute inset-x-0 bottom-0 h-[3px] bg-[#0874dd]" />}
          <span className="relative">{icon}</span>
        </button>
      ))}
      <div className="ml-auto flex">
        <button className="flex w-[168px] items-center text-[17px] whitespace-nowrap"><WeatherIcon /><span className="mr-[10px] ml-[10px]">27°C</span>Berawan</button>
        <button aria-label="Tray" className="flex w-8 items-center justify-center"><svg viewBox="0 0 16 10" className="h-[10px] w-4"><path d="M1 9l7-7 7 7" fill="none" stroke="#111" strokeWidth="1.500" /></svg></button>
        <span className="flex w-[30px] items-center justify-center">
          <svg viewBox="0 0 19 12" className="h-3 w-[19px]"><path d="M.7.700h16v10.600h-16z" fill="none" stroke="#000" strokeWidth="1.300" /><path d="M2.500 2.500h10v7h-10zM17 4h2v4h-2z" /></svg>
        </span>
        <span className="flex w-[30px] items-center justify-center"><CameraIcon /></span>
        <span className="flex w-[30px] items-center justify-center"><WifiIcon /></span>
        <span className="flex w-[42px] flex-col items-center justify-center text-sm leading-[22px]"><span>ENG</span><span>INTL</span></span>
        <span className="flex w-[94px] flex-col items-center justify-center text-sm leading-[22px]"><span>7:48</span><span>01/03/2023</span></span>
        <button aria-label="Notifications" className="relative flex w-[60px] items-center pl-[15px]">
          <svg viewBox="0 0 20 20" className="h-5 w-5"><path d="M0 0h20v16h-9l-4 4v-4H0z" /><path d="M4 4.500h12M4 8h12M4 11.500h8" stroke="#fff" strokeWidth="1.500" /></svg>
          <span className="absolute top-[25px] left-6 flex h-5 w-5 items-center justify-center rounded-full border border-[#77767a] bg-[#d7d5da] text-sm">2</span>
        </button>
        <span className="w-[6px] border-l border-[#a9a7ac]" />
      </div>
    </footer>
  )
}

export default function App() {
  return (
    <div className={clsx('relative flex h-screen w-full flex-col overflow-hidden bg-white', UI)}>
      <TabStrip />
      <Toolbar />
      <div className="flex h-10 shrink-0 items-center bg-white pb-1 pl-[19px] text-[#5f6368]">
        <button aria-label="Bookmark"><FaEarthAmericas size={18} /></button>
      </div>
      <ForumPage />
      <DownloadBar />
      <Taskbar />
      <ExplorerWindow />
      <GameWindow />
      <ErrorDialog />
    </div>
  )
}
